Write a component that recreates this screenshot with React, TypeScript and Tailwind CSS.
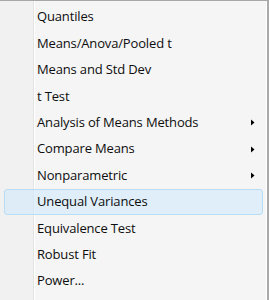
const items: { label: string; sub?: boolean; active?: boolean }[] = [
  { label: 'Quantiles' },
  { label: 'Means/Anova/Pooled t' },
  { label: 'Means and Std Dev' },
  { label: 't Test' },
  { label: 'Analysis of Means Methods', sub: true },
  { label: 'Compare Means', sub: true },
  { label: 'Nonparametric', sub: true },
  { label: 'Unequal Variances', active: true },
  { label: 'Equivalence Test' },
  { label: 'Robust Fit' },
  { label: 'Power...' },
]

function SubArrow() {
  return (
    <svg width="4" height="7" viewBox="0 0 4 7" className="mr-[7px]">
      <path d="M0 0.5 L3.5 3.5 L0 6.5 Z" fill="#000" />
    </svg>
  )
}

export default function App() {
  return (
    <div className="w-[269px] h-[300px] overflow-hidden border-t border-[#a7a7a7] border-r-2 border-r-[#a9a9a9] bg-[linear-gradient(to_right,#f1f1f1_33px,#e3e3e3_33px,#e3e3e3_34px,#ffffff_34px,#ffffff_35px,#f5f5f5_35px,#f5f5f5_266px,#ffffff_266px)]">
      <div
        className="pt-[3px] pl-[4px] pr-[4px] text-[13px] text-[#0d0d0d]"
        style={{ fontFamily: '"Open Sans", "Noto Sans", sans-serif' }}
      >
        {items.map((item) => (
          <div
            key={item.label}
            className={
              'h-[26.4px] flex items-center justify-between pl-[32px] rounded-[3px] border ' +
              (item.active
                ? 'border-[#b8ddf5] bg-[rgba(208,234,252,0.6)]'
                : 'border-transparent')
            }
          >
            <span className="tracking-[-0.15px]">{item.label}</span>
            {item.sub && <SubArrow />}
          </div>
        ))}
      </div>
    </div>
  )
}
